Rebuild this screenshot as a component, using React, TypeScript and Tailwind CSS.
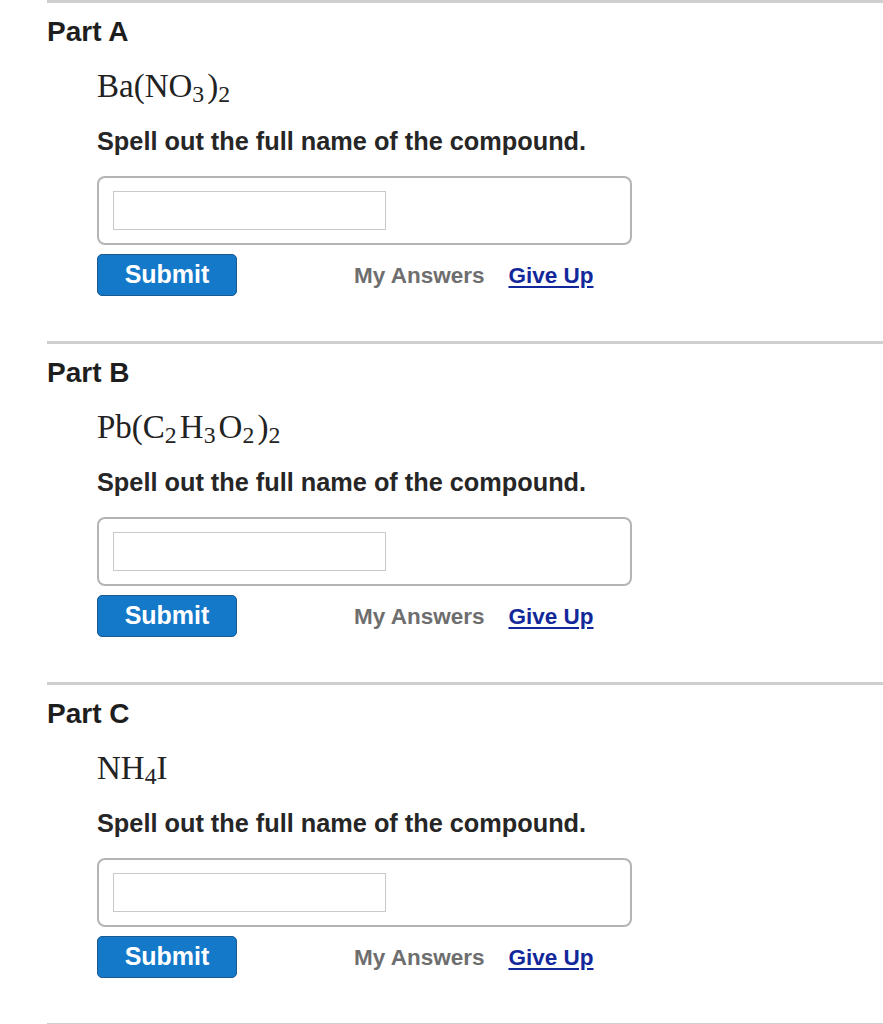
import type { ReactNode } from 'react'

const sans = { fontFamily: '"Liberation Sans", Arial, Helvetica, sans-serif' }
const serif = { fontFamily: '"Liberation Serif", "Times New Roman", serif' }

function Sub({ children, gap = false }: { children: ReactNode; gap?: boolean }) {
  return (
    <span className={`text-[0.72em] leading-[0] align-[-0.22em] ${gap ? 'mr-[0.13em]' : ''}`}>
      {children}
    </span>
  )
}

interface PartProps {
  label: string
  formula: ReactNode
}

function Part({ label, formula }: PartProps) {
  return (
    <section className="ml-[47px] h-[341px] border-t-[3px] border-[#cfcfcf]">
      <h2 className="mt-[13px] text-[28px] leading-[32px] font-bold text-[#1e1e1e]">{label}</h2>
      <div className="ml-[50px]">
        <div className="mt-[18px] text-[33px] leading-[40px] text-[#222]" style={serif}>
          {formula}
        </div>
        <p className="mt-[20px] text-[25.3px] leading-[30px] font-bold text-[#262626]">
          Spell out the full name of the compound.
        </p>
        <div className="mt-[20px] h-[69px] w-[535px] rounded-[8px] border-2 border-[#b4b4b4] pl-[14px] pt-[13px]">
          <input
            type="text"
            className="block h-[39px] w-[273px] border border-[#c9c9c9] bg-white outline-none"
          />
        </div>
        <div className="mt-[9px] flex items-baseline">
          <button className="h-[42px] w-[140px] rounded-[5px] border border-[#1a5a8f] bg-[#1479c9] text-[25px] font-bold text-white">
            Submit
          </button>
          <span className="ml-[117px] text-[22.5px] font-bold text-[#6e6e6e]">My Answers</span>
          <a href="#" className="ml-[24px] text-[22.5px] font-bold text-[#12289a] underline underline-offset-[3px]">
            Give Up
          </a>
        </div>
      </div>
    </section>
  )
}

export default function App() {
  return (
    <div className="min-h-screen w-[883px] bg-white" style={sans}>
      <Part
        label="Part A"
        formula={
          <>
            Ba(NO<Sub gap>3</Sub>)<Sub>2</Sub>
          </>
        }
      />
      <Part
        label="Part B"
        formula={
          <>
            Pb(C<Sub gap>2</Sub>H<Sub gap>3</Sub>O<Sub gap>2</Sub>)<Sub>2</Sub>
          </>
        }
      />
      <Part
        label="Part C"
        formula={
          <>
            NH<Sub>4</Sub>I
          </>
        }
      />
      <div className="ml-[47px] border-t-[3px] border-[#cfcfcf]" />
    </div>
  )
}
